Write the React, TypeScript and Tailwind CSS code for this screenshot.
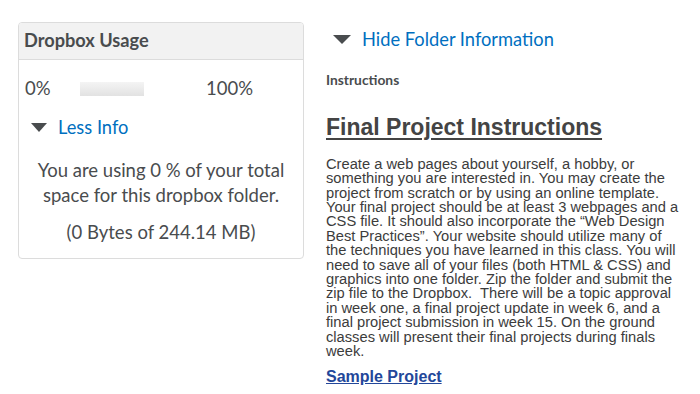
const lines = [
  "Create a web pages about yourself, a hobby, or",
  "something you are interested in. You may create the",
  "project from scratch or by using an online template.",
  "Your final project should be at least 3 webpages and a",
  "CSS file. It should also incorporate the “Web Design",
  "Best Practices”. Your website should utilize many of",
  "the techniques you have learned in this class. You will",
  "need to save all of your files (both HTML & CSS) and",
  "graphics into one folder. Zip the folder and submit the",
  "zip file to the Dropbox.\u00a0 There will be a topic approval",
  "in week one, a final project update in week 6, and a",
  "final project submission in week 15. On the ground",
  "classes will present their final projects during finals",
  "week.",
];

export default function App() {
  return (
    <div className="w-[700px] h-[394px] bg-white flex overflow-hidden">
      {/* Left column */}
      <div className="w-[326px] pl-[18px] pr-[22px] pt-[22px] shrink-0">
        <div className="border border-[#dcdcdc] rounded-[4px] overflow-hidden font-['Lato',sans-serif] text-[#494c4e]">
          <div className="bg-[#f2f2f2] border-b border-[#dcdcdc] h-[37px] flex items-center px-[5px]">
            <span className="text-[18.2px] font-bold">Dropbox Usage</span>
          </div>
          <div className="h-[53px] flex items-center px-[6px] pt-[4px] text-[18.5px]">
            <span className="w-[55px]">0%</span>
            <div className="w-[64px] h-[14px] bg-gradient-to-b from-[#f4f4f4] to-[#e2e2e2]" />
            <span className="ml-[62px]">100%</span>
          </div>
          <div className="flex items-center px-[12px] h-[24px] mt-[3px]">
            <svg width="16" height="10" viewBox="0 0 16 10" className="mr-[11px]">
              <polygon points="0,0 16,0 8,9" fill="#494c4e" />
            </svg>
            <span className="text-[18.3px] text-[#006fbf]">Less Info</span>
          </div>
          <div className="text-center text-[18.5px] leading-[25px] pt-[18px] pb-[13px]">
            <p>You are using 0 % of your total</p>
            <p>space for this dropbox folder.</p>
            <p className="mt-[12px]">(0 Bytes of 244.14 MB)</p>
          </div>
        </div>
      </div>

      {/* Right column */}
      <div className="flex-1 pt-[28px]">
        <div className="flex items-center pl-[7px] h-[24px] font-['Lato',sans-serif]">
          <svg width="18" height="10" viewBox="0 0 18 10" className="mr-[11px]">
            <polygon points="0,0 18,0 9,9" fill="#494c4e" />
          </svg>
          <span className="text-[18.3px] text-[#006fbf]">Hide Folder Information</span>
        </div>
        <div className="mt-[18px] font-['Lato',sans-serif] text-[13.8px] font-bold text-[#494c4e]">
          Instructions
        </div>
        <h2 className="mt-[22px] font-['Liberation_Sans',Arial,sans-serif] text-[23px] font-bold text-[#444] underline decoration-[2px] underline-offset-[3px] leading-[28px]">
          Final Project Instructions
        </h2>
        <div className="mt-[16px] font-['Liberation_Sans',Arial,sans-serif] text-[14.7px] leading-[14.4px] text-[#3c3c3c] whitespace-nowrap">
          {lines.map((l, i) => (
            <div key={i}>{l}</div>
          ))}
        </div>
        <a className="block mt-[7px] font-['Liberation_Sans',Arial,sans-serif] text-[16px] font-bold text-[#23479a] underline">
          Sample Project
        </a>
      </div>
    </div>
  );
}
